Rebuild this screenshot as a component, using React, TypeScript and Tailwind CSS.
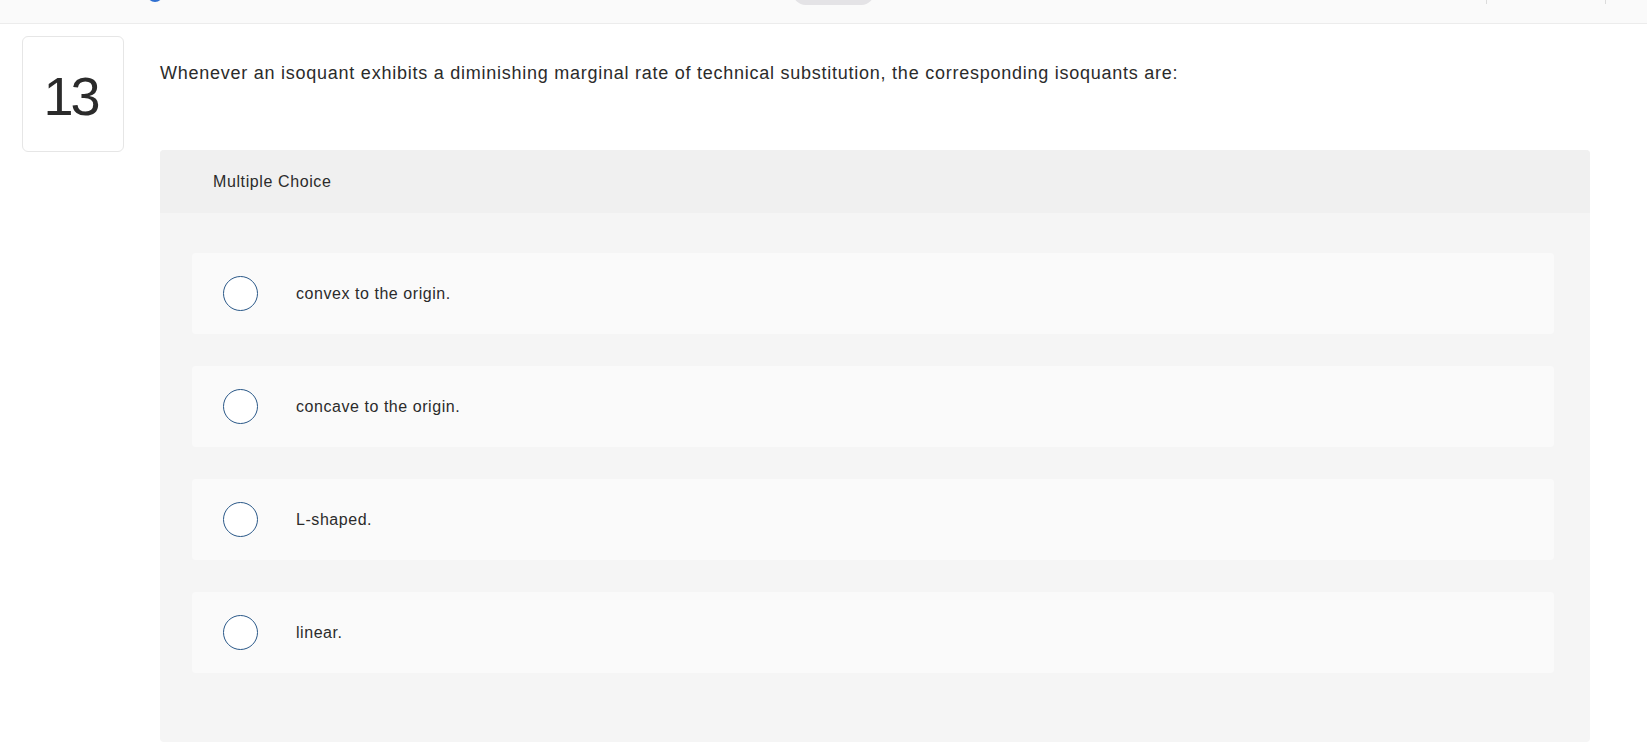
import React from "react";

const options = [
  "convex to the origin.",
  "concave to the origin.",
  "L-shaped.",
  "linear.",
];

export default function App() {
  return (
    <div
      className="min-h-[751px] w-full bg-white text-[#2b2b2b]"
      style={{ fontFamily: '"Liberation Sans", Arial, sans-serif' }}
    >
      {/* cut-off top header */}
      <div className="flex h-[24px] items-start overflow-hidden border-b border-[#ececec] bg-[#fafafa]">
        <div className="ml-[147px] -mt-[14px] h-[16px] w-[16px] shrink-0 rounded-full bg-[#2f6fd0]" />
        <div className="ml-[630px] -mt-[20px] h-[25px] w-[81px] shrink-0 rounded-full bg-[#e4e3e6]" />
        <div className="ml-[612px] h-[4px] w-px shrink-0 bg-[#dcdcdc]" />
        <div className="ml-[118px] h-[4px] w-px shrink-0 bg-[#dcdcdc]" />
      </div>

      <div className="flex">
        <div className="pl-[22px] pt-[12px]">
          <div className="flex h-[116px] w-[102px] items-center justify-center rounded-[6px] border border-[#e6e6e6] bg-white">
            <span className="pr-[5px] pt-[4px] text-[54px] leading-none tracking-[-3px] text-[#2b2b2b]">13</span>
          </div>
        </div>

        <div className="ml-[36px] mr-[57px] flex-1 pt-[37px]">
          <p className="text-[18px] leading-[24px] tracking-[0.75px] text-[#2b2b2b]">
            Whenever an isoquant exhibits a diminishing marginal rate of technical substitution, the corresponding isoquants are:
          </p>

          <div className="mt-[65px] overflow-hidden rounded-[4px] bg-[#f5f5f5]">
            <div className="flex h-[63px] items-center bg-[#f0f0f0] pl-[53px] text-[16px] tracking-[0.6px] text-[#2b2b2b]">
              Multiple Choice
            </div>
            <div className="flex flex-col gap-[32px] pb-[69px] pl-[32px] pr-[36px] pt-[40px]">
              {options.map((o) => (
                <div
                  key={o}
                  className="flex h-[81px] items-center rounded-[4px] bg-[#fafafa] pl-[31px]"
                >
                  <div className="h-[35px] w-[35px] shrink-0 rounded-full border-[1.5px] border-[#2a5888] bg-white" />
                  <span className="ml-[38px] text-[16px] tracking-[0.55px] text-[#2b2b2b]">{o}</span>
                </div>
              ))}
            </div>
          </div>
        </div>
      </div>
    </div>
  );
}
